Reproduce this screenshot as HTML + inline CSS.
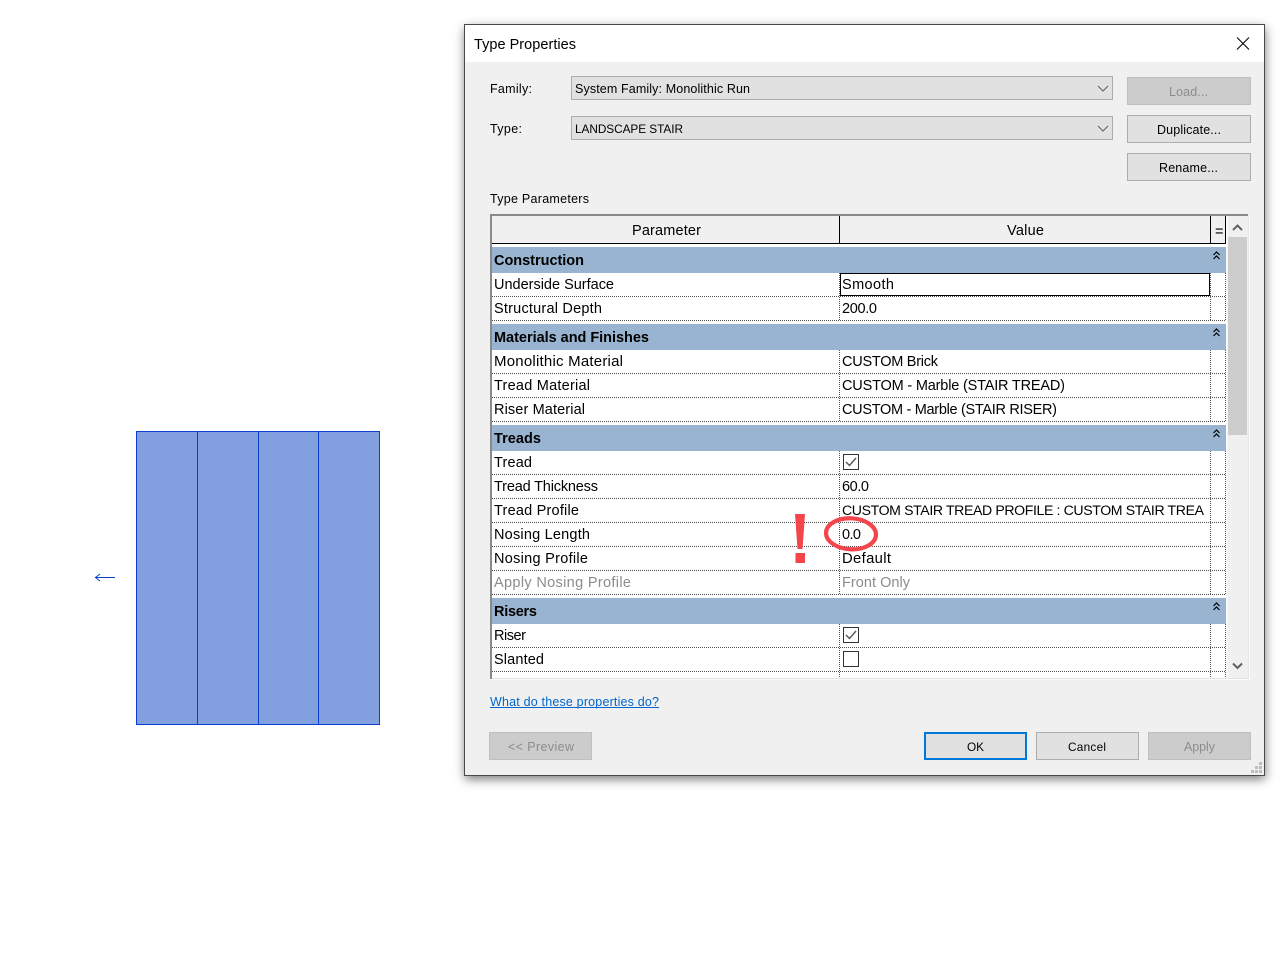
<!DOCTYPE html>
<html lang="en">
<head>
<meta charset="utf-8">
<title>Type Properties</title>
<style>
html,body{margin:0;padding:0;background:#fff;width:1283px;height:961px;overflow:hidden}
#shadow{position:absolute;left:465px;top:25px;width:800px;height:751px;box-shadow:0 3px 10px rgba(0,0,0,.55)}
svg{position:absolute;left:0;top:0;display:block}
text{font-family:"Liberation Sans",sans-serif;fill:#000;white-space:pre}
.s{font-size:12.5px}
.g{font-size:14.5px}
.h{font-size:14.5px;font-weight:bold;fill:#000}
.d{fill:#8c8c8c}
.c{fill:none;stroke:#505050;stroke-width:1;stroke-dasharray:1 1;shape-rendering:crispEdges}
.b{fill:#e1e1e1;stroke:#adadad;stroke-width:1;shape-rendering:crispEdges}
.x{fill:#cccccc;stroke:#bfbfbf;stroke-width:1;shape-rendering:crispEdges}
.l{stroke:#000;stroke-width:1;shape-rendering:crispEdges}
.sec{fill:#99b4d1}
.chev{fill:none;stroke:#000;stroke-width:1.2}
</style>
</head>
<body>
<div id="shadow"></div>
<svg width="1283" height="961" viewBox="0 0 1283 961" xmlns="http://www.w3.org/2000/svg">
  <!-- Stair plan -->
  <g shape-rendering="crispEdges">
    <rect x="136.5" y="431.5" width="243" height="293" fill="#829fdf" stroke="#0a3fd0"/>
    <path d="M197.5 432V724M258.5 432V724M318.5 432V724" stroke="#0a3fd0" fill="none"/>
    <path d="M95 577.5H115" stroke="#0a3fd0"/>
  </g>
  <path d="M100 574L95.5 577.5L100 581" fill="none" stroke="#0a3fd0" stroke-width="1"/>

  <!-- Dialog frame -->
  <rect x="464.5" y="24.5" width="800" height="751" fill="#f0f0f0" stroke="#484848" shape-rendering="crispEdges"/>
  <rect x="465" y="25" width="799" height="37" fill="#fff"/>
  <text x="474" y="49" font-size="14.5" textLength="102">Type Properties</text>
  <path d="M1237 37.5L1249 49.5M1249 37.5L1237 49.5" stroke="#111" stroke-width="1.2" fill="none"/>

  <!-- Top controls -->
  <text class="s" x="490" y="93" textLength="42">Family:</text>
  <text class="s" x="490" y="133" textLength="32">Type:</text>
  <rect class="b" x="571.5" y="76.5" width="541" height="23"/>
  <rect class="b" x="571.5" y="116.5" width="541" height="23"/>
  <text class="s" x="575" y="93" textLength="175">System Family: Monolithic Run</text>
  <text x="575" y="133" font-size="11.8" textLength="108">LANDSCAPE STAIR</text>
  <path d="M1098 86L1103 91L1108 86M1098 126L1103 131L1108 126" fill="none" stroke="#606060" stroke-width="1"/>

  <rect class="x" x="1127.5" y="77.5" width="123" height="27"/>
  <rect class="b" x="1127.5" y="115.5" width="123" height="27"/>
  <rect class="b" x="1127.5" y="153.5" width="123" height="27"/>
  <text class="s d" x="1169" y="96" textLength="39">Load...</text>
  <text class="s" x="1157" y="134" textLength="64">Duplicate...</text>
  <text class="s" x="1159" y="172" textLength="59">Rename...</text>

  <text class="s" x="490" y="203" textLength="99">Type Parameters</text>

  <!-- Grid container -->
  <rect x="491" y="216" width="735" height="462" fill="#fff"/>
  <rect x="1226" y="216" width="22" height="462" fill="#f0f0f0"/>
  <rect x="1226" y="216" width="1.5" height="462" fill="#fcfcfc"/>
  <rect x="1248" y="215" width="1" height="464" fill="#e6e6e6"/>
  <rect x="1249" y="215" width="1" height="465" fill="#fbfbfb"/>
  <rect x="490" y="678" width="759" height="1" fill="#e3e3e3"/>
  <rect x="490" y="679" width="760" height="1" fill="#fbfbfb"/>
  <rect x="490" y="214" width="758" height="2" fill="#8a8a8a"/>
  <rect x="490" y="214" width="2" height="465" fill="#8a8a8a"/>

  <!-- Header -->
  <rect x="492" y="216" width="734" height="27" fill="#f0f0f0"/>
  <path class="l" d="M492 243.5H1226M839.5 216V244M1210.5 216V244M1225.5 216V244" fill="none"/>
  <text class="g" x="632" y="235" textLength="69">Parameter</text>
  <text class="g" x="1007" y="235" textLength="37">Value</text>
  <text class="g" x="1215" y="236" textLength="8">=</text>

  <!-- Section bands -->
  <rect class="sec" x="492" y="247" width="734" height="26"/>
  <rect class="sec" x="492" y="324" width="734" height="26"/>
  <rect class="sec" x="492" y="425" width="734" height="26"/>
  <rect class="sec" x="492" y="598" width="734" height="26"/>
  <text class="h" x="494" y="265" textLength="90">Construction</text>
  <text class="h" x="494" y="342" textLength="155">Materials and Finishes</text>
  <text class="h" x="494" y="443" textLength="47">Treads</text>
  <text class="h" x="494" y="616" textLength="43">Risers</text>
  <path class="chev" d="M1213.5 255L1216.5 252L1219.5 255M1213.5 259L1216.5 256L1219.5 259"/>
  <path class="chev" d="M1213.5 332L1216.5 329L1219.5 332M1213.5 336L1216.5 333L1219.5 336"/>
  <path class="chev" d="M1213.5 433L1216.5 430L1219.5 433M1213.5 437L1216.5 434L1219.5 437"/>
  <path class="chev" d="M1213.5 606L1216.5 603L1219.5 606M1213.5 610L1216.5 607L1219.5 610"/>

  <!-- Dotted grid lines -->
  <path class="c" d="M492 296.5H1226M492 320.5H1226M492 373.5H1226M492 397.5H1226M492 421.5H1226M492 474.5H1226M492 498.5H1226M492 522.5H1226M492 546.5H1226M492 570.5H1226M492 594.5H1226M492 647.5H1226M492 671.5H1226"/>
  <path class="c" d="M839.5 273V321M839.5 350V422M839.5 451V595M839.5 624V678"/>
  <path class="c" d="M1210.5 273V321M1210.5 350V422M1210.5 451V595M1210.5 624V678"/>
  <path class="c" d="M1225.5 273V321M1225.5 350V422M1225.5 451V595M1225.5 624V678"/>

  <!-- Selected cell -->
  <rect x="840.5" y="273.5" width="369" height="22" fill="#fff" stroke="#000" stroke-width="1.3" shape-rendering="crispEdges"/>

  <!-- Names -->
  <text class="g" x="494" y="289" textLength="120">Underside Surface</text>
  <text class="g" x="494" y="313" textLength="108">Structural Depth</text>
  <text x="494" y="366" font-size="15" textLength="129">Monolithic Material</text>
  <text class="g" x="494" y="390" textLength="96">Tread Material</text>
  <text class="g" x="494" y="414" textLength="91">Riser Material</text>
  <text class="g" x="494" y="467" textLength="38">Tread</text>
  <text class="g" x="494" y="491" textLength="104">Tread Thickness</text>
  <text class="g" x="494" y="515" textLength="85">Tread Profile</text>
  <text class="g" x="494" y="539" textLength="96">Nosing Length</text>
  <text class="g" x="494" y="563" textLength="94">Nosing Profile</text>
  <text class="g d" x="494" y="587" textLength="137">Apply Nosing Profile</text>
  <text class="g" x="494" y="640" textLength="32">Riser</text>
  <text class="g" x="494" y="664" textLength="50">Slanted</text>

  <!-- Values -->
  <text class="g" x="842" y="289" textLength="52">Smooth</text>
  <text class="g" x="842" y="313" textLength="35">200.0</text>
  <text class="g" x="842" y="366" textLength="96">CUSTOM Brick</text>
  <text class="g" x="842" y="390" textLength="223">CUSTOM - Marble (STAIR TREAD)</text>
  <text class="g" x="842" y="414" textLength="215">CUSTOM - Marble (STAIR RISER)</text>
  <text class="g" x="842" y="491" textLength="27">60.0</text>
  <text x="842" y="515" font-size="14.1" textLength="362">CUSTOM STAIR TREAD PROFILE : CUSTOM STAIR TREA</text>
  <text class="g" x="842" y="539" textLength="19">0.0</text>
  <text x="842" y="563" font-size="14.8" textLength="49">Default</text>
  <text class="g d" x="842" y="587" textLength="68">Front Only</text>

  <!-- Checkboxes -->
  <rect x="843.5" y="454.5" width="15" height="15" fill="#fff" stroke="#333" shape-rendering="crispEdges"/>
  <path d="M846 462L849.5 465.5L856 458" fill="none" stroke="#555" stroke-width="1.4"/>
  <rect x="843.5" y="627.5" width="15" height="15" fill="#fff" stroke="#333" shape-rendering="crispEdges"/>
  <path d="M846 635L849.5 638.5L856 631" fill="none" stroke="#555" stroke-width="1.4"/>
  <rect x="843.5" y="651.5" width="15" height="15" fill="#fff" stroke="#333" shape-rendering="crispEdges"/>

  <!-- Scrollbar -->
  <rect x="1228" y="237" width="19" height="198" fill="#cdcdcd"/>
  <path d="M1233 230L1237.5 225.5L1242 230" fill="none" stroke="#606060" stroke-width="2"/>
  <path d="M1233 663.5L1237.5 668L1242 663.5" fill="none" stroke="#606060" stroke-width="2"/>

  <!-- Annotation -->
  <ellipse cx="851" cy="533.8" rx="25" ry="15.5" fill="none" stroke="#f5454c" stroke-width="4.2" transform="rotate(3 851 533.8)"/>
  <path d="M795 514H805L802.5 549H797.5Z" fill="#f5454c"/>
  <rect x="795.5" y="553" width="9.5" height="10" fill="#f5454c"/>

  <!-- Link -->
  <text class="s" x="490" y="706" textLength="169" style="fill:#0066cc">What do these properties do?</text>
  <rect x="490" y="707" width="169" height="1" fill="#0066cc"/>

  <!-- Bottom buttons -->
  <rect class="x" x="489.5" y="732.5" width="102" height="27"/>
  <text class="s d" x="508" y="751" textLength="66">&lt;&lt; Preview</text>
  <rect x="925" y="733" width="101" height="26" fill="#e1e1e1" stroke="#0078d7" stroke-width="2" shape-rendering="crispEdges"/>
  <text x="967" y="751" font-size="11.8" textLength="17">OK</text>
  <rect class="b" x="1036.5" y="732.5" width="102" height="27"/>
  <text x="1068" y="751" font-size="11.8" textLength="38">Cancel</text>
  <rect class="x" x="1148.5" y="732.5" width="102" height="27"/>
  <text class="s d" x="1184" y="751" textLength="31">Apply</text>

  <!-- Resize grip -->
  <g fill="#bdbdbd">
    <rect x="1251" y="770" width="3" height="3"/>
    <rect x="1255" y="770" width="3" height="3"/>
    <rect x="1259" y="770" width="3" height="3"/>
    <rect x="1255" y="766" width="3" height="3"/>
    <rect x="1259" y="766" width="3" height="3"/>
    <rect x="1259" y="762" width="3" height="3"/>
  </g>
</svg>
</body>
</html>
